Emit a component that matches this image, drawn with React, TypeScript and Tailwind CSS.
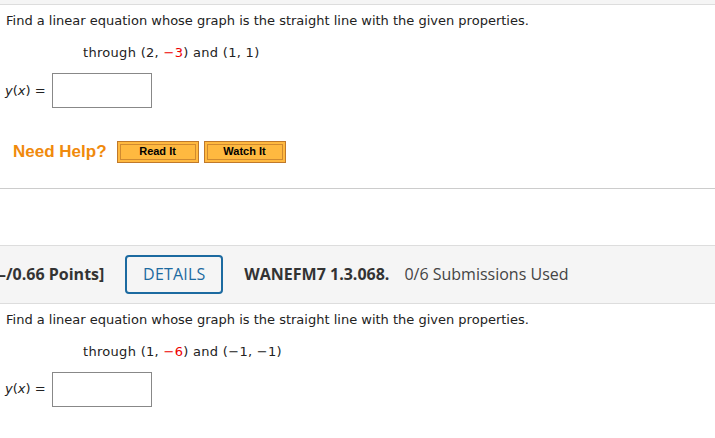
const q = "font-['DejaVu_Sans',Verdana,sans-serif]";

function Question({ a, b }: { a: React.ReactNode; b: React.ReactNode }) {
  return (
    <div className={`${q} text-[13px] text-[#222]`}>
      <p className="pl-[6px] pt-[8px] leading-[16px]">
        Find a linear equation whose graph is the straight line with the given properties.
      </p>
      <p className="pl-[83px] mt-[16px] leading-[16px] tracking-[0.3px]">
        through {a} and {b}
      </p>
      <div className="flex items-center pl-[5px] mt-[12px]">
        <span>
          <i>y</i>(<i>x</i>) =
        </span>
        <div className="ml-[6px] w-[100px] h-[35px] border border-[#888] bg-white" />
      </div>
    </div>
  );
}

const R = ({ children }: { children: React.ReactNode }) => (
  <span className="text-[#e00]">{children}</span>
);

function HelpButton({ label }: { label: string }) {
  return (
    <button className="w-[82px] h-[22px] border border-[#c0792a] bg-[#ffb940] p-[2px] font-['Liberation_Sans',Arial,sans-serif] text-[11px] font-bold text-black">
      <span className="flex h-full items-center justify-center border border-[#d08a30] leading-none">
        {label}
      </span>
    </button>
  );
}

export default function App() {
  return (
    <div className="w-[715px] h-[438px] overflow-hidden bg-white">
      <div className="h-[5px] bg-[#f5f5f5] border-b border-[#ddd]" />
      <Question a={<>(2, <R>−3</R>)</>} b={<>(1, 1)</>} />

      {/* help row */}
      <div className="flex items-center pl-[13px] mt-[31px]">
        <span className="font-['Liberation_Sans',Arial,sans-serif] text-[17px] font-bold text-[#f08a0c]">
          Need Help?
        </span>
        <div className="ml-[10px] flex gap-[5px]">
          <HelpButton label="Read It" />
          <HelpButton label="Watch It" />
        </div>
      </div>

      <div className="mt-[23px] border-t border-[#ccc]" />

      {/* next question header */}
      <div className="mt-[56px] h-[59px] bg-[#f5f5f5] border-y border-[#ddd] flex items-center font-['Open_Sans',sans-serif] text-[16px] text-[#333]">
        <span className="font-bold -ml-[2px]">–/0.66 Points]</span>
        <button className="ml-[21px] w-[98px] h-[39px] rounded-[4px] border-2 border-[#1c6aa0] bg-[#f5f5f5] text-[#1c6aa0] tracking-[0.2px]">
          DETAILS
        </button>
        <span className="ml-[21px] font-bold">WANEFM7 1.3.068.</span>
        <span className="ml-[15px] text-[#444]">0/6 Submissions Used</span>
      </div>

      <Question a={<>(1, <R>−6</R>)</>} b={<>(−1, −1)</>} />
    </div>
  );
}
